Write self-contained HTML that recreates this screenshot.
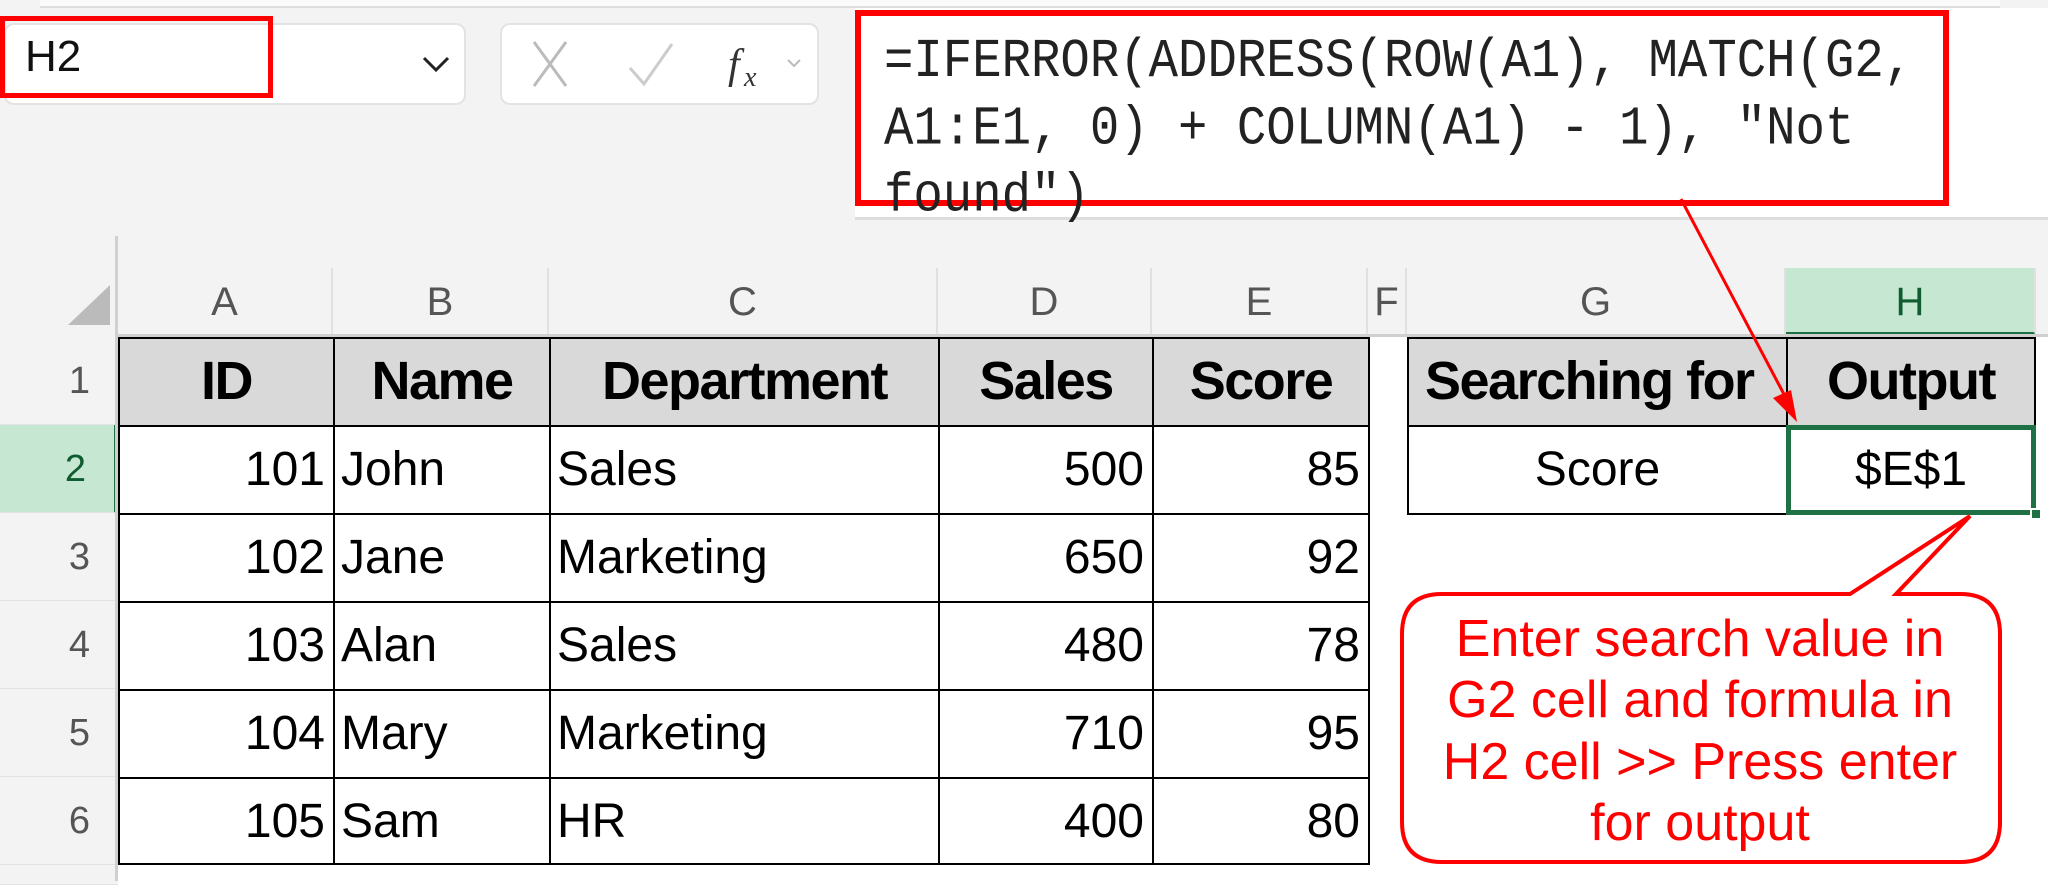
<!DOCTYPE html>
<html><head><style>
*{margin:0;padding:0;box-sizing:border-box}
body{width:2048px;height:881px;background:#fff;position:relative;overflow:hidden;font-family:"Liberation Sans",Arial,sans-serif}
.a{position:absolute}
.hdr{position:absolute;top:268px;height:69px;background:#f3f3f3;color:#555;font-size:40px;text-align:center;line-height:69px;border-right:2px solid #e0e0e0}
.rn{position:absolute;left:0;width:118px;background:#f3f3f3;color:#555;font-size:38px;text-align:right;padding-right:28px;border-bottom:1px solid #e3e3e3}
.c{position:absolute;border:2px solid #000;font-size:48px;color:#000;white-space:nowrap;overflow:hidden}
.h{background:#d9d9d9;font-weight:bold;font-size:54px;text-align:center;line-height:84px;letter-spacing:-1.5px}
.r{text-align:right;padding-right:8px;line-height:86px}
.l{text-align:left;padding-left:6px;line-height:86px}
</style></head><body>
<div class="a" style="left:0;top:0;width:2048px;height:337px;background:#f3f3f3"></div>
<div class="a" style="left:40px;top:0;width:1960px;height:8px;background:#fafafa;border-bottom:2px solid #ddd"></div>
<div class="a" style="left:855px;top:8px;width:1193px;height:212px;background:#fff;border-bottom:3px solid #ddd"></div>
<div class="a" style="left:4px;top:23px;width:462px;height:82px;background:#fff;border:2px solid #e3e3e3;border-radius:10px"></div>
<div class="a" style="left:0;top:16px;width:273px;height:82px;border:5px solid #f00;font-size:44px;line-height:72px;padding-left:20px;color:#111">H2</div>
<svg class="a" style="left:418px;top:50px" width="36" height="28"><path d="M6 8 L18 20 L30 8" stroke="#222" stroke-width="3" fill="none"/></svg>
<div class="a" style="left:500px;top:23px;width:319px;height:82px;background:#fff;border:2px solid #e3e3e3;border-radius:10px"></div>
<svg class="a" style="left:530px;top:38px" width="280" height="52"><path d="M4 4 L36 48 M36 4 L4 48" stroke="#bbb" stroke-width="3" fill="none"/><path d="M100 30 L114 46 L142 6" stroke="#ccc" stroke-width="3" fill="none"/><text x="198" y="40" font-family="Liberation Serif" font-style="italic" font-size="42" fill="#333">f</text><text x="214" y="48" font-family="Liberation Serif" font-style="italic" font-size="28" fill="#333">x</text><path d="M258 22 L264 28 L270 22" stroke="#bbb" stroke-width="2" fill="none"/></svg>
<div class="a" style="left:855px;top:10px;width:1094px;height:196px;border:6px solid #f00"></div>
<div class="a" style="left:884px;top:28px;font-family:'Liberation Mono',monospace;font-size:49px;line-height:60px;color:#222;white-space:pre;transform:scaleY(1.12);transform-origin:top left">=IFERROR(ADDRESS(ROW(A1), MATCH(G2,
A1:E1, 0) + COLUMN(A1) - 1), "Not
found")</div>
<div class="a" style="left:0;top:236px;width:118px;height:101px;background:#f3f3f3;border-right:3px solid #d0d0d0"></div>
<svg class="a" style="left:68px;top:285px" width="44" height="42"><path d="M42 0 L42 40 L0 40 Z" fill="#bbb"/></svg>
<div class="hdr" style="left:118px;width:215px">A</div>
<div class="hdr" style="left:333px;width:216px">B</div>
<div class="hdr" style="left:549px;width:389px">C</div>
<div class="hdr" style="left:938px;width:214px">D</div>
<div class="hdr" style="left:1152px;width:216px">E</div>
<div class="hdr" style="left:1368px;width:39px">F</div>
<div class="hdr" style="left:1407px;width:379px">G</div>
<div class="hdr" style="left:1786px;width:250px;background:#c6e7d2;color:#0e5c2f;border-bottom:5px solid #1e7145">H</div>
<div class="a" style="left:118px;top:334px;width:1930px;height:3px;background:#d0d0d0"></div>
<div class="rn" style="top:337px;height:88px;line-height:88px">1</div>
<div class="rn" style="top:425px;height:88px;line-height:88px;background:#c6e7d2;color:#0e5c2f;border-right:4px solid #1e7145">2</div>
<div class="rn" style="top:513px;height:88px;line-height:88px">3</div>
<div class="rn" style="top:601px;height:88px;line-height:88px">4</div>
<div class="rn" style="top:689px;height:88px;line-height:88px">5</div>
<div class="rn" style="top:777px;height:88px;line-height:88px">6</div>
<div class="rn" style="top:865px;height:20px"></div>
<div class="a" style="left:115px;top:337px;width:3px;height:544px;background:#d0d0d0"></div>
<div class="c h" style="left:118px;top:337px;width:217px;height:90px">ID</div>
<div class="c h" style="left:333px;top:337px;width:218px;height:90px">Name</div>
<div class="c h" style="left:549px;top:337px;width:391px;height:90px">Department</div>
<div class="c h" style="left:938px;top:337px;width:216px;height:90px">Sales</div>
<div class="c h" style="left:1152px;top:337px;width:218px;height:90px">Score</div>
<div class="c h" style="left:1407px;top:337px;width:381px;height:90px;text-align:left;padding-left:16px">Searching for</div>
<div class="c h" style="left:1786px;top:337px;width:250px;height:90px">Output</div>

<div class="c r" style="left:118px;top:425px;width:217px;height:90px">101</div>
<div class="c l" style="left:333px;top:425px;width:218px;height:90px">John</div>
<div class="c l" style="left:549px;top:425px;width:391px;height:90px">Sales</div>
<div class="c r" style="left:938px;top:425px;width:216px;height:90px">500</div>
<div class="c r" style="left:1152px;top:425px;width:218px;height:90px">85</div>
<div class="c" style="left:1407px;top:425px;width:381px;height:90px;text-align:center;line-height:86px">Score</div>
<div class="c" style="left:1786px;top:425px;width:250px;height:90px;text-align:center;line-height:80px;border:5px solid #1e7145">$E$1</div>
<div class="a" style="left:2030px;top:508px;width:12px;height:12px;background:#1e7145;border:2px solid #fff"></div>

<div class="c r" style="left:118px;top:513px;width:217px;height:90px">102</div>
<div class="c l" style="left:333px;top:513px;width:218px;height:90px">Jane</div>
<div class="c l" style="left:549px;top:513px;width:391px;height:90px">Marketing</div>
<div class="c r" style="left:938px;top:513px;width:216px;height:90px">650</div>
<div class="c r" style="left:1152px;top:513px;width:218px;height:90px">92</div>

<div class="c r" style="left:118px;top:601px;width:217px;height:90px">103</div>
<div class="c l" style="left:333px;top:601px;width:218px;height:90px">Alan</div>
<div class="c l" style="left:549px;top:601px;width:391px;height:90px">Sales</div>
<div class="c r" style="left:938px;top:601px;width:216px;height:90px">480</div>
<div class="c r" style="left:1152px;top:601px;width:218px;height:90px">78</div>

<div class="c r" style="left:118px;top:689px;width:217px;height:90px">104</div>
<div class="c l" style="left:333px;top:689px;width:218px;height:90px">Mary</div>
<div class="c l" style="left:549px;top:689px;width:391px;height:90px">Marketing</div>
<div class="c r" style="left:938px;top:689px;width:216px;height:90px">710</div>
<div class="c r" style="left:1152px;top:689px;width:218px;height:90px">95</div>

<div class="c r" style="left:118px;top:777px;width:217px;height:88px">105</div>
<div class="c l" style="left:333px;top:777px;width:218px;height:88px">Sam</div>
<div class="c l" style="left:549px;top:777px;width:391px;height:88px">HR</div>
<div class="c r" style="left:938px;top:777px;width:216px;height:88px">400</div>
<div class="c r" style="left:1152px;top:777px;width:218px;height:88px">80</div>

<svg class="a" style="left:0;top:0" width="2048" height="881">
<path d="M1445 594 L1850 594 L1970 516 L1896 594 L1960 594 Q2000 594 2000 634 L2000 822 Q2000 862 1960 862 L1442 862 Q1402 862 1402 822 L1402 634 Q1402 594 1442 594 Z" fill="#fff" stroke="#f00" stroke-width="4"/>
<line x1="1681" y1="199" x2="1787" y2="400" stroke="#f00" stroke-width="3"/>
<path d="M1797 422 L1773 398 L1791 390 Z" fill="#f00"/>
<text font-family="Liberation Sans" font-size="52" fill="#f00" text-anchor="middle"><tspan x="1700" y="656">Enter search value in</tspan><tspan x="1700" y="717">G2 cell and formula in</tspan><tspan x="1700" y="779">H2 cell &gt;&gt; Press enter</tspan><tspan x="1700" y="840">for output</tspan></text>
</svg>
</body></html>
